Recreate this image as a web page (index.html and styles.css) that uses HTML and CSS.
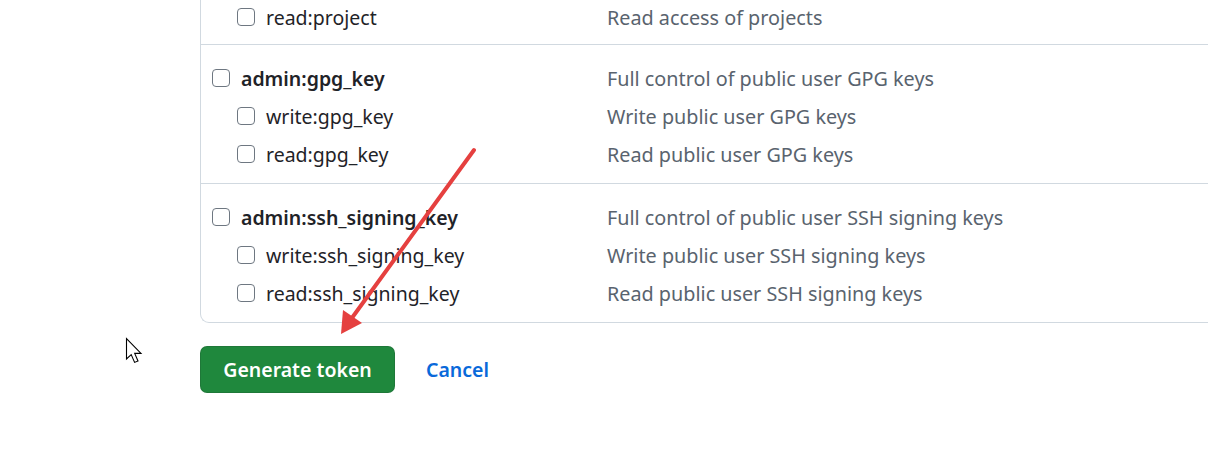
FILE: index.html
```html
<!DOCTYPE html>
<html>
<head>
<meta charset="utf-8">
<link rel="stylesheet" href="styles.css">
</head>
<body>
<div class="page">
  <div class="scopes">
    <div class="group first">
      <label class="row child"><span class="name"><input type="checkbox" class="cb"><span class="label">read:project</span></span><span class="desc">Read access of projects</span></label>
    </div>
    <div class="group">
      <label class="row parent"><span class="name"><input type="checkbox" class="cb"><span class="label">admin:gpg_key</span></span><span class="desc">Full control of public user GPG keys</span></label>
      <label class="row child"><span class="name"><input type="checkbox" class="cb"><span class="label">write:gpg_key</span></span><span class="desc">Write public user GPG keys</span></label>
      <label class="row child"><span class="name"><input type="checkbox" class="cb"><span class="label">read:gpg_key</span></span><span class="desc">Read public user GPG keys</span></label>
    </div>
    <div class="group">
      <label class="row parent"><span class="name"><input type="checkbox" class="cb"><span class="label">admin:ssh_signing_key</span></span><span class="desc">Full control of public user SSH signing keys</span></label>
      <label class="row child"><span class="name"><input type="checkbox" class="cb"><span class="label">write:ssh_signing_key</span></span><span class="desc">Write public user SSH signing keys</span></label>
      <label class="row child"><span class="name"><input type="checkbox" class="cb"><span class="label">read:ssh_signing_key</span></span><span class="desc">Read public user SSH signing keys</span></label>
    </div>
  </div>
  <div class="actions">
    <button class="btn-primary" type="button">Generate token</button>
    <a class="cancel" href="#">Cancel</a>
  </div>
</div>

<svg class="arrow" width="1208" height="464" viewBox="0 0 1208 464">
  <line x1="474" y1="150" x2="349" y2="322" stroke="#e5403f" stroke-width="4" stroke-linecap="round"/>
  <polygon points="341,334 343,310 362,323" fill="#e5403f"/>
</svg>

<svg class="cursor" width="20" height="28" viewBox="0 0 20 28">
  <path d="M1.5 1.5 L1.5 22 L6.2 17.6 L9.6 25.4 L13 24 L9.7 16.4 L16 16.4 Z" fill="#fff" stroke="#000" stroke-width="1.1" stroke-linejoin="miter"/>
</svg>
</body>
</html>
```

FILE: styles.css
```css
html, body {
  margin: 0;
  padding: 0;
  background: #ffffff;
  overflow: hidden;
}
body {
  width: 1208px;
  height: 464px;
  position: relative;
  font-family: "Noto Sans", "Open Sans", sans-serif;
  color: #1f2328;
}
.page {
  padding-left: 200px;
}
.scopes {
  margin-top: -2px;
  width: 1007px;
  border: 1px solid #d1d9e0;
  border-top: none;
  border-right: none;
  border-radius: 0 0 0 9px;
}
.group {
  padding: 14px 0 10px 12px;
  border-top: 1px solid #d1d9e0;
}
.group.first {
  border-top: none;
  padding-top: 0;
  padding-bottom: 8px;
}
.row {
  display: flex;
  align-items: center;
  height: 38px;
  font-size: 19.5px;
  cursor: pointer;
}
.name {
  display: flex;
  align-items: center;
  width: 394px;
  flex: none;
}
.child .name {
  padding-left: 24px;
  width: 370px;
}
.cb {
  appearance: none;
  -webkit-appearance: none;
  margin: 0 11px 0 0;
  width: 18px;
  height: 18px;
  border: 1.5px solid #6e7781;
  border-radius: 4px;
  background: #fff;
  flex: none;
  box-sizing: border-box;
}
.parent .cb {
  margin-left: -1px;
}
.parent .label {
  font-weight: 600;
}
.desc {
  color: #59636e;
  font-size: 19.8px;
}
.actions {
  display: flex;
  align-items: center;
  gap: 31px;
  margin-top: 23px;
}
.btn-primary {
  font-family: inherit;
  font-size: 19.5px;
  font-weight: 600;
  color: #ffffff;
  background: #1f883d;
  border: 1px solid rgba(31, 35, 40, 0.15);
  border-radius: 7px;
  width: 195px;
  height: 47px;
  padding: 0;
}
.cancel {
  font-size: 19.5px;
  font-weight: 600;
  color: #0969da;
  text-decoration: none;
}
.arrow {
  position: absolute;
  left: 0;
  top: 0;
  pointer-events: none;
}
.cursor {
  position: absolute;
  left: 125px;
  top: 337px;
  pointer-events: none;
}
```
